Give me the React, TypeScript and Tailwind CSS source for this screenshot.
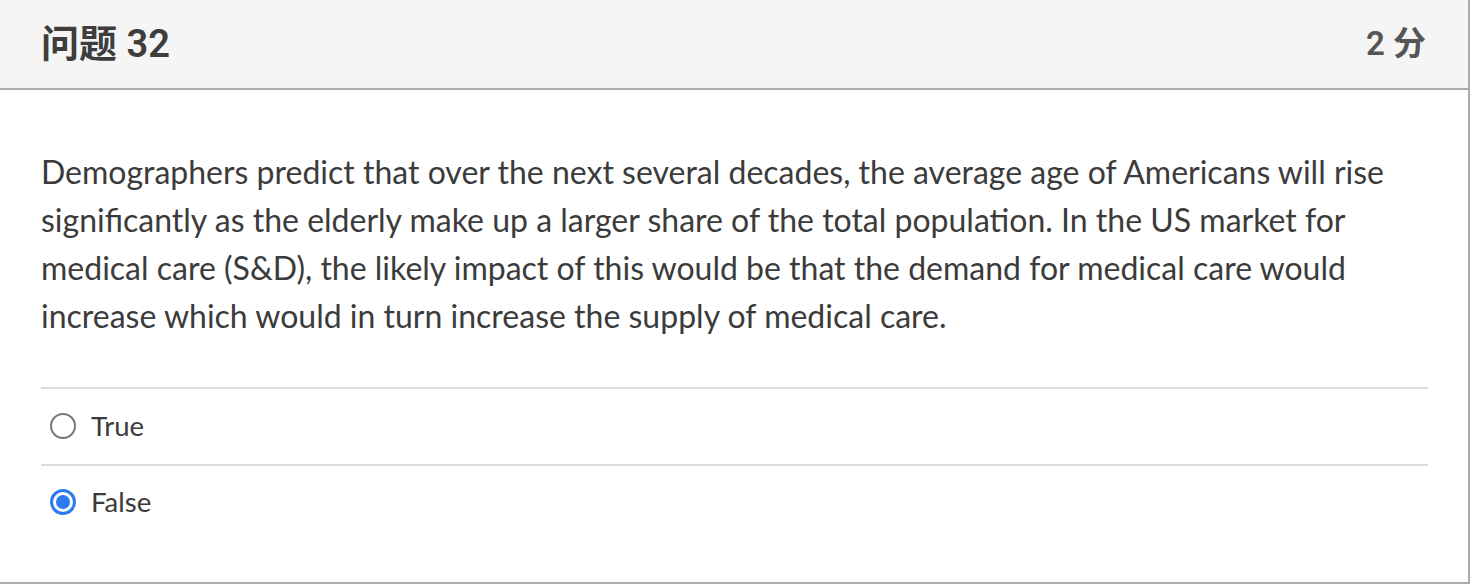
export default function App() {
  return (
    <div className="w-[1470px] h-[584px] bg-white" style={{ fontFamily: "Lato, 'Noto Sans CJK SC', sans-serif" }}>
      <div className="flex h-[584px] flex-col border-r-2 border-b-2 border-[#ababab]">
        <div className="flex h-[90px] shrink-0 items-center justify-between border-b-2 border-[#ababab] bg-[#f5f5f5] pl-[41px] pr-[42px]">
          <h2
            className="text-[38px] font-semibold text-[#3d3d3d]"
            style={{ fontFamily: "Roboto, 'Noto Sans CJK SC', sans-serif" }}
          >
            问题 32
          </h2>
          <span
            className="text-[33px] font-semibold text-[#555]"
            style={{ fontFamily: "Roboto, 'Noto Sans CJK SC', sans-serif" }}
          >
            2 分
          </span>
        </div>
        <div className="flex flex-col pl-[41px] pr-[40px] pt-[58px]">
          <p className="text-[32px] leading-[48px] text-[#3b3b3b]">
            Demographers predict that over the next several decades, the average age of Americans will rise
            significantly as the elderly make up a larger share of the total population. In the US market for
            medical care (S&amp;D), the likely impact of this would be that the demand for medical care would
            increase which would in turn increase the supply of medical care.
          </p>
          <div className="mt-[47px] flex flex-col">
            <label className="flex h-[77px] items-center gap-[15px] border-t-2 border-[#dddddd] pb-[2px] pl-[9px]">
              <span className="size-[26px] rounded-full border-2 border-[#777]" />
              <span className="text-[27.5px] text-[#3b3b3b]">True</span>
            </label>
            <label className="flex h-[77px] items-center gap-[15px] border-t-2 border-[#dddddd] pb-[3px] pl-[9px]">
              <span className="flex size-[26px] items-center justify-center rounded-full border-[3px] border-[#2a7af2]">
                <span className="size-[14px] rounded-full bg-[#2a7af2]" />
              </span>
              <span className="text-[27.5px] text-[#3b3b3b]">False</span>
            </label>
          </div>
        </div>
      </div>
    </div>
  );
}
